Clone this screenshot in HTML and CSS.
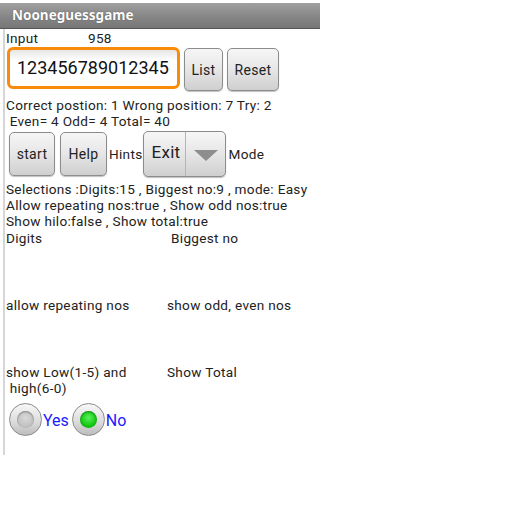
FILE: index.html
```html
<!DOCTYPE html>
<html lang="en">
<head>
    <meta charset="UTF-8">
    <title>Nooneguessgame</title>
    <link rel="stylesheet" href="styles.css">
</head>
<body>
    <div class="phone">
        <div class="title-bar">Nooneguessgame</div>
        <div class="content">
            <div class="input-row">
                <span class="input-label">Input</span>
                <span class="input-count">958</span>
            </div>

            <div class="entry-row">
                <div class="edit-text">123456789012345</div>
                <button class="btn btn-list">List</button>
                <button class="btn btn-reset">Reset</button>
            </div>

            <p class="result">Correct postion: 1 Wrong position: 7 Try: 2</p>
            <p class="result">&nbsp;Even= 4 Odd= 4 Total= 40</p>

            <div class="action-row">
                <button class="btn btn-start">start</button>
                <button class="btn btn-help">Help</button>
                <span class="label">Hints</span>
                <div class="spinner">
                    <span class="spinner-text">Exit</span>
                    <span class="spinner-arrow"></span>
                </div>
                <span class="label">Mode</span>
            </div>

            <div class="selections">
                <p>Selections :Digits:15 , Biggest no:9 , mode: Easy</p>
                <p>Allow repeating nos:true , Show odd nos:true</p>
                <p>Show hilo:false , Show total:true</p>
            </div>

            <div class="option-grid">
                <div class="option">Digits</div>
                <div class="option first-right">Biggest no</div>
                <div class="option">allow repeating nos</div>
                <div class="option">show odd, even nos</div>
                <div class="option">show Low(1-5) and<br>&nbsp;high(6-0)</div>
                <div class="option">Show Total</div>
            </div>

            <div class="radio-row">
                <span class="radio"><span class="dot"></span></span>
                <span class="radio-label">Yes</span>
                <span class="radio checked"><span class="dot"></span></span>
                <span class="radio-label">No</span>
            </div>
        </div>
    </div>
</body>
</html>
```

FILE: styles.css
```css
body {
    margin: 0;
    background: #ffffff;
    font-family: Roboto, 'Noto Sans', sans-serif;
    color: #222222;
}

.phone {
    width: 320px;
    padding-top: 3px;
}

.title-bar {
    height: 25px;
    line-height: 24px;
    padding-left: 12px;
    font-family: 'Noto Sans', sans-serif;
    font-size: 13.5px;
    font-weight: bold;
    color: #ffffff;
    background: linear-gradient(to bottom, #a0a0a0 0%, #888888 50%, #767676 100%);
    border-bottom: 1px solid #555555;
    text-shadow: 0 0 1px #444444;
}

.content {
    margin-left: 3px;
    height: 426px;
    border-left: 2px solid #d6d6d6;
    font-size: 13.6px;
    letter-spacing: 0.3px;
}

.input-row {
    height: 17px;
    line-height: 17px;
    padding-left: 1px;
    padding-top: 1px;
}

.input-count {
    margin-left: 46px;
}

.entry-row {
    display: flex;
    gap: 4px;
    padding-left: 2px;
    height: 46px;
    margin-top: -1px;
}

.edit-text {
    width: 160px;
    height: 36px;
    margin-top: 1px;
    padding-left: 7px;
    line-height: 36px;
    font-size: 18px;
    letter-spacing: 0;
    color: #111111;
    background: linear-gradient(to bottom, #e6e6e6 0%, #ffffff 30%, #ffffff 100%);
    border: 3px solid #f98b0b;
    border-radius: 6px;
}

.btn {
    height: 43px;
    margin-top: 2px;
    padding: 0;
    font-family: inherit;
    font-size: 14px;
    letter-spacing: 0.3px;
    color: #222222;
    background: linear-gradient(to bottom, #f6f6f6 0%, #e6e6e6 50%, #cfcfcf 100%);
    border: 1px solid #8c8c8c;
    border-radius: 5px;
    box-shadow: 0 1px 1px rgba(0, 0, 0, 0.25);
}

.btn-list { width: 39px; }
.btn-reset { width: 52px; }

.result {
    margin: 0;
    padding-left: 1px;
    height: 16px;
    line-height: 16px;
}

.entry-row + .result {
    margin-top: 5px;
}

.action-row {
    display: flex;
    align-items: center;
    height: 46px;
    margin-top: 2px;
    padding-left: 4px;
}

.action-row .btn {
    margin-top: 0;
    height: 44px;
}

.btn-start { width: 46px; }
.btn-help { width: 47px; margin-left: 5px; }

.label {
    margin: 0 1px 0 2px;
}

.spinner {
    display: flex;
    width: 81px;
    height: 44px;
    background: linear-gradient(to bottom, #f6f6f6 0%, #e6e6e6 50%, #cfcfcf 100%);
    border: 1px solid #8c8c8c;
    border-radius: 5px;
    box-shadow: 0 1px 1px rgba(0, 0, 0, 0.25);
}

.spinner-text {
    width: 39px;
    line-height: 40px;
    padding-left: 2px;
    font-size: 17px;
    text-align: center;
    border-right: 1px solid #b4b4b4;
}

.spinner-arrow {
    width: 0;
    height: 0;
    margin: 18px 0 0 8px;
    border-left: 12px solid transparent;
    border-right: 12px solid transparent;
    border-top: 11px solid #8e8e8e;
}

.selections {
    margin-top: 4px;
}

.selections p {
    margin: 0;
    padding-left: 1px;
    height: 16px;
    line-height: 16px;
}

.option-grid {
    display: grid;
    grid-template-columns: 161px 1fr;
    grid-auto-rows: 67px;
    margin-top: 1px;
    padding-left: 1px;
}

.option {
    line-height: 16px;
}

.option.first-right {
    padding-left: 4px;
}

.radio-row {
    display: flex;
    align-items: center;
    height: 34px;
    margin-top: -29px;
    padding-left: 4px;
}

.radio {
    display: flex;
    align-items: center;
    justify-content: center;
    width: 31px;
    height: 31px;
    border: 1px solid #8a8a8a;
    border-radius: 50%;
    background: linear-gradient(to bottom, #f8f8f8 0%, #dadada 60%, #bcbcbc 100%);
}

.dot {
    width: 17px;
    height: 17px;
    border-radius: 50%;
    background: radial-gradient(circle at 50% 40%, #d8d8d8 0%, #c4c4c4 60%, #b0b0b0 100%);
    box-shadow: inset 0 1px 2px rgba(0, 0, 0, 0.35);
}

.radio.checked .dot {
    background: radial-gradient(circle at 50% 40%, #5cf05c 0%, #12c812 60%, #089a08 100%);
}

.radio-label {
    font-size: 16px;
    letter-spacing: 0;
    color: #1a1aff;
    margin: 2px 3px 0 1px;
}
```
